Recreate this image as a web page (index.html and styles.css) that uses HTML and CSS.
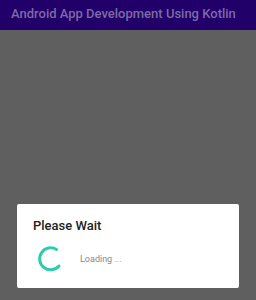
FILE: index.html
```html
<!DOCTYPE html>
<html lang="en">
<head>
  <meta charset="UTF-8">
  <title>Please Wait</title>
  <link rel="stylesheet" href="styles.css">
</head>
<body>

<!-- App bar -->
<div class="appbar">Android App Development Using Kotlin</div>

<!-- Dimmed content area with the progress dialog -->
<div class="screen">
  <div class="dialog">
    <div class="title">Please Wait</div>
    <div class="row">
      <svg class="spinner" width="30" height="30" viewBox="0 0 30 30">
        <path d="M 20.5 5.5 A 11 11 0 1 0 23 22" fill="none" stroke="#2ccdae" stroke-width="3" stroke-linecap="round"/>
      </svg>
      <span class="message">Loading ...</span>
    </div>
  </div>
</div>

</body>
</html>
```

FILE: styles.css
```css
body {
  margin: 0;
  width: 256px;
  height: 300px;
  font-family: Roboto, 'Noto Sans', sans-serif;
  background: #5f5f5f;
  display: flex;
  flex-direction: column;
  overflow: hidden;
}

.appbar {
  height: 30px;
  line-height: 28px;
  background: #22006a;
  color: #7d6aa6;
  font-size: 13px;
  font-weight: 500;
  padding-left: 11px;
  white-space: nowrap;
}

.screen {
  flex: 1;
  display: flex;
  flex-direction: column;
  justify-content: flex-end;
  padding: 0 17px 12px 17px;
}

.dialog {
  background: #fff;
  height: 84px;
  border-radius: 2px;
  padding: 14px 16px 0 16px;
  box-sizing: border-box;
}

.title {
  font-size: 13px;
  font-weight: 500;
  color: #222;
}

.row {
  display: flex;
  align-items: center;
  margin-top: 11px;
}

.spinner {
  margin-left: 3px;
}

.message {
  margin-left: 14px;
  font-size: 9px;
  color: #888;
}
```
